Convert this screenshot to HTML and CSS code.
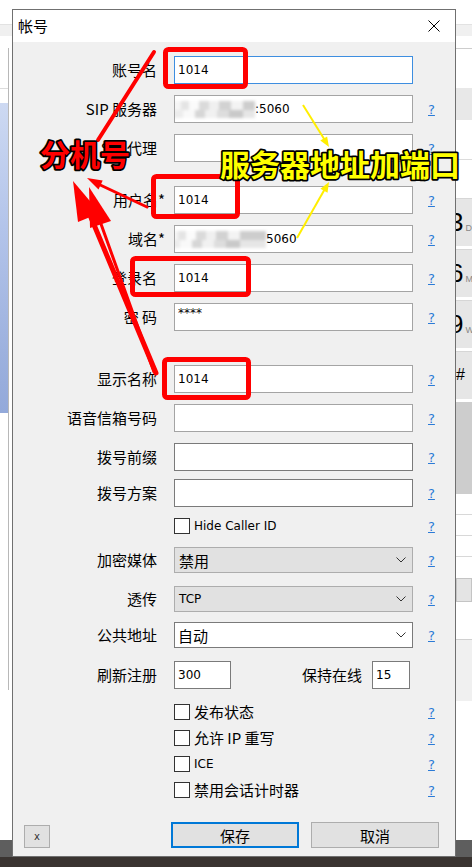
FILE: index.html
```html
<!DOCTYPE html>
<html lang="zh-CN">
<head>
  <meta charset="UTF-8" />
  <meta name="viewport" content="width=device-width, initial-scale=1.0" />
  <title>帐号</title>
  <link rel="stylesheet" href="styles.css">
</head>
<body>
  <div class="screen">
    <!-- app window behind the dialog -->
    <div class="app">
      <div class="app-top"></div>
      <div class="app-bar"></div>
      <div class="app-main">
        <div class="side-left">
          <div class="side-pane">
            <div class="side-box"></div>
            <div class="side-blue"></div>
          </div>
        </div>
        <div class="app-center"></div>
        <div class="side-right">
          <div class="r-line"></div>
          <div class="r-band"></div>
          <div class="r-gap"></div>
          <div class="r-space"></div>
          <div class="key">3<small>DEF</small></div>
          <div class="key">6<small>MNO</small></div>
          <div class="key">9<small>WXYZ</small></div>
          <div class="key key-hash">#</div>
          <div class="key-dark"></div>
          <div class="r-rows">
            <div class="r-row"></div>
            <div class="r-row"></div>
            <div class="r-row"></div>
          </div>
          <div class="r-btn"></div>
          <div class="r-end"></div>
        </div>
      </div>
      <div class="taskbar"></div>
    </div>

    <!-- account dialog -->
    <div class="dialog">
      <div class="titlebar">
        <span class="title">帐号</span>
        <svg class="close" width="12" height="12" viewBox="0 0 12 12">
          <path d="M0.5 0.5 L11.5 11.5 M11.5 0.5 L0.5 11.5" stroke="#000" stroke-width="1" fill="none"/>
        </svg>
      </div>

      <div class="dlg-body">
        <div class="row first">
          <span class="lbl">账号名</span>
          <div class="field focus">1014</div>
        </div>
        <div class="row">
          <span class="lbl">SIP 服务器</span>
          <div class="field"><span class="mosaic"></span>:5060</div>
          <a class="help">?</a>
        </div>
        <div class="row">
          <span class="lbl">SIP 代理</span>
          <div class="field"></div>
          <a class="help">?</a>
        </div>
        <div class="row gap-l">
          <span class="lbl">用户名<span class="star">*</span></span>
          <div class="field">1014</div>
          <a class="help">?</a>
        </div>
        <div class="row">
          <span class="lbl">域名<span class="star">*</span></span>
          <div class="field"><span class="mosaic wide"></span>5060</div>
          <a class="help">?</a>
        </div>
        <div class="row">
          <span class="lbl">登录名</span>
          <div class="field">1014</div>
          <a class="help">?</a>
        </div>
        <div class="row">
          <span class="lbl">密 码</span>
          <div class="field pwd">****</div>
          <a class="help">?</a>
        </div>
        <div class="row gap-xl">
          <span class="lbl">显示名称</span>
          <div class="field">1014</div>
          <a class="help">?</a>
        </div>
        <div class="row">
          <span class="lbl">语音信箱号码</span>
          <div class="field"></div>
          <a class="help">?</a>
        </div>
        <div class="row">
          <span class="lbl">拨号前缀</span>
          <div class="field dark"></div>
          <a class="help">?</a>
        </div>
        <div class="row gap-s">
          <span class="lbl">拨号方案</span>
          <div class="field dark"></div>
          <a class="help">?</a>
        </div>

        <div class="row check-row hide-id">
          <span class="lbl"></span>
          <label class="check"><span class="box"></span><span class="en">Hide Caller ID</span></label>
          <a class="help">?</a>
        </div>

        <div class="row sel-row enc">
          <span class="lbl">加密媒体</span>
          <div class="field select"><span>禁用</span>
            <svg width="10" height="6" viewBox="0 0 10 6"><path d="M0.5 0.5 L5 5 L9.5 0.5" stroke="#333" fill="none"/></svg>
          </div>
          <a class="help">?</a>
        </div>
        <div class="row sel-row">
          <span class="lbl">透传</span>
          <div class="field select"><span class="en">TCP</span>
            <svg width="10" height="6" viewBox="0 0 10 6"><path d="M0.5 0.5 L5 5 L9.5 0.5" stroke="#333" fill="none"/></svg>
          </div>
          <a class="help">?</a>
        </div>
        <div class="row sel-row pub">
          <span class="lbl">公共地址</span>
          <div class="field select combo"><span>自动</span>
            <svg width="10" height="6" viewBox="0 0 10 6"><path d="M0.5 0.5 L5 5 L9.5 0.5" stroke="#333" fill="none"/></svg>
          </div>
          <a class="help">?</a>
        </div>

        <div class="row reg">
          <span class="lbl">刷新注册</span>
          <div class="field small dark">300</div>
          <span class="lbl-inline">保持在线</span>
          <div class="field tiny dark">15</div>
        </div>

        <div class="row check-row opts">
          <span class="lbl"></span>
          <label class="check"><span class="box"></span>发布状态</label>
          <a class="help">?</a>
        </div>
        <div class="row check-row">
          <span class="lbl"></span>
          <label class="check"><span class="box"></span>允许 IP 重写</label>
          <a class="help">?</a>
        </div>
        <div class="row check-row">
          <span class="lbl"></span>
          <label class="check"><span class="box"></span><span class="en">ICE</span></label>
          <a class="help">?</a>
        </div>
        <div class="row check-row">
          <span class="lbl"></span>
          <label class="check"><span class="box"></span>禁用会话计时器</label>
          <a class="help">?</a>
        </div>

        <div class="footer">
          <button class="btn-x">x</button>
          <button class="btn primary">保存</button>
          <button class="btn">取消</button>
        </div>
      </div>
    </div>

    <!-- annotations drawn over the screenshot -->
    <svg class="marks" width="472" height="867" viewBox="0 0 472 867">
      <g stroke="#ff0000" fill="none" stroke-linecap="round">
        <line x1="154" y1="52" x2="98" y2="140" stroke-width="4"/>
        <line x1="147" y1="207" x2="96" y2="183" stroke-width="3"/>
        <line x1="156" y1="373" x2="82" y2="196" stroke-width="5"/>
        <line x1="154" y1="372" x2="96" y2="210" stroke-width="3"/>
      </g>
      <g fill="#ff0000">
        <polygon points="87,178 98.5,189.5 102.7,180.5"/>
        <polygon points="73,181 100,213 78,222"/>
        <polygon points="89,187 111,221 90,228"/>
      </g>
      <g stroke="#ff0000" stroke-width="5" fill="none">
        <rect x="165.5" y="49.5" width="80" height="37" rx="3"/>
        <rect x="153.5" y="176.5" width="84" height="40" rx="3"/>
        <rect x="132.5" y="258.5" width="116" height="36" rx="3"/>
        <rect x="164.5" y="359.5" width="84" height="38" rx="3"/>
      </g>
      <g stroke="#ffee00" stroke-width="2" fill="none">
        <line x1="303" y1="105" x2="326" y2="142"/>
        <line x1="297" y1="238" x2="326" y2="187"/>
      </g>
      <g fill="#ffee00">
        <polygon points="329,147 327.1,136.4 320.3,140.6"/>
        <polygon points="329,182 327.5,192.7 320.5,188.7"/>
      </g>
      <text class="anno" x="40" y="166" fill="#ff0000">分机号</text>
      <text class="anno" x="220" y="176" fill="#ffff00">服务器地址加端口</text>
    </svg>
  </div>
</body>
</html>
```

FILE: styles.css
```css
* {
  box-sizing: border-box;
}
body {
  margin: 0;
  background: #fff;
  font-family: "DejaVu Sans", "Noto Sans CJK SC", sans-serif;
  font-size: 12px;
  color: #000;
}
.screen {
  position: relative;
  width: 472px;
  height: 867px;
  overflow: hidden;
}

/* background app */
.app {
  display: flex;
  flex-direction: column;
  height: 100%;
}
.app-top {
  height: 24px;
}
.app-bar {
  height: 12px;
  background: #f0f0f0;
  border-top: 1px solid #e2e2e2;
}
.app-main {
  flex: 1;
  display: flex;
}
.side-left {
  width: 12px;
  padding-top: 12px;
}
.side-pane {
  width: 9px;
  height: 642px;
  border-right: 1px solid #b8b8b8;
  padding-top: 40px;
}
.side-box {
  height: 15px;
  border-top: 1px solid #dcdcdc;
}
.side-blue {
  height: 310px;
  background: linear-gradient(#cdd9f2, #b3c4ea 40%, #9db1de 80%, #93a9da);
}
.app-center {
  flex: 1;
}
.side-right {
  width: 16px;
  padding-top: 12px;
  font-family: "Liberation Sans", sans-serif;
}
.r-line {
  height: 40px;
  border-top: 1px solid #cdcdcd;
}
.r-band {
  height: 34px;
  background: #e8e8e8;
  border-bottom: 2px solid #fff;
}
.r-gap {
  height: 38px;
  border-bottom: 1px solid #dcdcdc;
}
.r-space {
  height: 38px;
}
.key {
  height: 48px;
  margin-bottom: 3px;
  padding-left: 0;
  background: #e6e6e6;
  border-top: 1px solid #d6d6d6;
  font-size: 26px;
  line-height: 46px;
  white-space: nowrap;
  overflow: hidden;
  text-indent: -7px;
}
.key small {
  font-size: 9px;
  color: #888;
  margin-left: 2px;
}
.key-hash {
  font-size: 16px;
  text-indent: 0;
}
.key-dark {
  height: 92px;
  background: #cdcdcd;
}
.r-rows {
  padding-top: 20px;
}
.r-row {
  height: 21px;
  border-top: 1px solid #d8d8d8;
}
.r-btn {
  height: 24px;
  margin-top: 1px;
  border: 1px solid #c4c4c4;
  background: #e4e4e4;
}
.r-end {
  height: 62px;
  border-top: 1px solid #d0d0d0;
  margin-top: 37px;
  background: #f0f0f0;
}
.taskbar {
  height: 27px;
  background: #5e5e5e;
  border-bottom: 10px solid #3a3431;
}

/* dialog */
.dialog {
  position: absolute;
  left: 12px;
  top: 9px;
  width: 444px;
  height: 848px;
  border: 1px solid #707070;
  background: #f0f0f0;
}
.titlebar {
  display: flex;
  align-items: center;
  height: 32px;
  padding: 0 15px 0 5px;
  background: #fff;
}
.title {
  font-family: "Noto Sans CJK SC", sans-serif;
  font-size: 15px;
  line-height: 20px;
}
.close {
  margin-left: auto;
}
.dlg-body {
  padding-top: 14px;
}
.row {
  display: flex;
  align-items: center;
  height: 28px;
  margin-top: 11px;
}
.row.first {
  margin-top: 0;
}
.row.gap-l {
  margin-top: 24px;
}
.row.gap-xl {
  margin-top: 34px;
}
.row.gap-s {
  margin-top: 8px;
}
.lbl {
  width: 144px;
  flex-shrink: 0;
  text-align: right;
  font-family: "Noto Sans CJK SC", sans-serif;
  font-size: 15px;
  line-height: 20px;
  white-space: nowrap;
}
.star {
  margin-right: -8px;
}
.field {
  display: flex;
  align-items: center;
  width: 239px;
  height: 28px;
  margin-left: 17px;
  padding-left: 3px;
  background: #fff;
  border: 1px solid #a4a4a4;
  white-space: nowrap;
  overflow: hidden;
}
.field.focus {
  border-color: #3d8ee0;
}
.field.dark {
  border-color: #7a7a7a;
}
.field.pwd {
  align-items: flex-start;
  padding-top: 2px;
}
.mosaic {
  display: inline-block;
  width: 82px;
  height: 17px;
  margin-left: -5px;
  background:
    linear-gradient(90deg, #f6f6f6 0 8px, #e4e4e4 8px 16px, #fbfbfb 16px 26px, #dadada 26px 36px, #f0f0f0 36px 46px, #d2d2d2 46px 58px, #f3f3f3 58px 70px, #cdcdcd 70px 82px) top / 100% 9px no-repeat,
    linear-gradient(90deg, #ececec 0 10px, #f9f9f9 10px 22px, #d6d6d6 22px 32px, #f1f1f1 32px 44px, #dddddd 44px 56px, #c9c9c9 56px 70px, #e6e6e6 70px 82px) bottom / 100% 8px no-repeat;
  filter: blur(1.5px);
}
.mosaic.wide {
  width: 96px;
  margin-left: -8px;
}
.help {
  margin-left: 15px;
  color: #2b7ad6;
  text-decoration: underline;
  font-size: 13px;
  cursor: pointer;
}

/* checkboxes */
.check-row {
  height: 16px;
  margin-top: 10px;
}
.check-row.hide-id {
  margin-top: 11px;
}
.check-row.opts {
  margin-top: 15px;
}
.check {
  display: flex;
  align-items: center;
  width: 239px;
  margin-left: 17px;
  font-family: "Noto Sans CJK SC", sans-serif;
  font-size: 15px;
  line-height: 20px;
  white-space: nowrap;
}
.box {
  width: 16px;
  height: 16px;
  margin-right: 4px;
  background: #fff;
  border: 1px solid #333;
  flex-shrink: 0;
}
.en {
  font-family: "DejaVu Sans", sans-serif;
  font-size: 12px;
}

/* selects */
.sel-row {
  height: 26px;
  margin-top: 13px;
}
.sel-row.pub {
  margin-top: 10px;
}
.field.select {
  height: 26px;
  justify-content: space-between;
  padding: 0 6px 0 4px;
  background: #e1e1e1;
  border-color: #adadad;
  font-family: "Noto Sans CJK SC", sans-serif;
  font-size: 15px;
}
.field.select.combo {
  background: #fff;
  border-color: #7a7a7a;
  padding-left: 3px;
}

/* registration row */
.row.reg {
  margin-top: 13px;
}
.field.small {
  width: 57px;
}
.field.tiny {
  width: 38px;
  margin-left: 10px;
}
.lbl-inline {
  margin-left: 71px;
  font-family: "Noto Sans CJK SC", sans-serif;
  font-size: 15px;
  line-height: 20px;
}

/* buttons */
.footer {
  display: flex;
  align-items: flex-start;
  margin-top: 24px;
}
.btn-x {
  width: 26px;
  height: 23px;
  margin: 3px 0 0 11px;
  padding: 0;
  background: #e1e1e1;
  border: 1px solid #adadad;
  font-family: "DejaVu Sans", sans-serif;
  font-size: 10px;
  color: #333;
}
.btn {
  width: 128px;
  height: 26px;
  margin-left: 12px;
  padding: 0;
  background: #e1e1e1;
  border: 1px solid #adadad;
  font-family: "Noto Sans CJK SC", sans-serif;
  font-size: 15px;
  color: #000;
}
.btn.primary {
  margin-left: 121px;
  border: 2px solid #0078d7;
}

/* annotations */
.marks {
  position: absolute;
  left: 0;
  top: 0;
  pointer-events: none;
}
.anno {
  font-family: "Noto Sans CJK SC", sans-serif;
  font-size: 30px;
  font-weight: 700;
  stroke: #000;
  stroke-width: 3.5px;
  stroke-linejoin: round;
  paint-order: stroke;
}
```
